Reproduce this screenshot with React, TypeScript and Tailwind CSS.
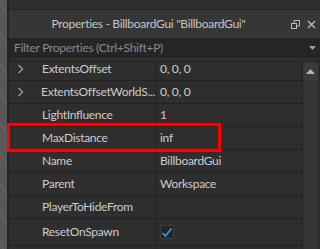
import { ReactNode } from 'react';

type Row = { name: string; value?: string; expand?: boolean; check?: boolean; tall?: boolean };

const ROWS: Row[] = [
  { name: 'ExtentsOffset', value: '0, 0, 0', expand: true },
  { name: 'ExtentsOffsetWorldS...', value: '0, 0, 0', expand: true },
  { name: 'LightInfluence', value: '1' },
  { name: 'MaxDistance', value: 'inf' },
  { name: 'Name', value: 'BillboardGui' },
  { name: 'Parent', value: 'Workspace' },
  { name: 'PlayerToHideFrom' },
  { name: 'ResetOnSpawn', check: true, tall: true },
  { name: '' },
];

function Chevron() {
  return (
    <svg width="7" height="10" viewBox="0 0 7 10" className="shrink-0">
      <path d="M1.5 1 L5.5 5 L1.5 9" fill="none" stroke="#9a9a9a" strokeWidth="1.4" />
    </svg>
  );
}

function PropRow({ row }: { row: Row }) {
  let value: ReactNode = row.value;
  if (row.check) {
    value = (
      <div className="w-[14px] h-[14px] bg-[#242424] border border-[#3c3c3c] flex items-center justify-center">
        <svg width="12" height="11" viewBox="0 0 12 11">
          <path d="M1.5 6 L4.5 9 L10.5 1.5" fill="none" stroke="#3b9be6" strokeWidth="1.6" />
        </svg>
      </div>
    );
  }
  return (
    <div className={`flex border-b border-[#222222] shrink-0 ${row.tall ? 'h-[27px]' : 'h-[23px]'}`}>
      <div className="w-[147px] flex items-center pl-[8px] border-r border-[#222222]">
        <div className="w-[25px]">{row.expand && <Chevron />}</div>
        <span className="whitespace-nowrap">{row.name}</span>
      </div>
      <div className="flex-1 flex items-center pl-[4px] whitespace-nowrap">{value}</div>
    </div>
  );
}

export default function App() {
  return (
    <div
      className="w-[320px] h-[249px] flex overflow-hidden relative text-[12px] tracking-[-0.3px] text-[#cccccc]"
      style={{ fontFamily: "Lato, 'Liberation Sans', sans-serif" }}
    >
      {/* neighbouring window edge */}
      <div className="w-[7px] h-full bg-[#5a5759] shrink-0 overflow-hidden">
        <svg width="7" height="249" viewBox="0 0 7 249">
          {Array.from({ length: 9 }).map((_, i) => (
            <path key={i} d={`M0 ${i * 30 + 4} L7 ${i * 30 + 14}`} stroke="#6e6b6d" strokeWidth="1" />
          ))}
        </svg>
      </div>
      <div className="w-[2px] h-full bg-[#232323] shrink-0" />

      <div className="flex-1 flex flex-col bg-[#2e2e2e] min-w-0">
        <div className="h-[10px] bg-[#2e2e2e] border-b border-[#232323] shrink-0" />

        {/* title bar */}
        <div className="h-[28px] bg-[#363636] flex items-center shrink-0 relative">
          <div className="flex-1 text-center pr-[32px] text-[#c4c4c4] whitespace-nowrap">
            Properties - BillboardGui "BillboardGui"
          </div>
          <div className="absolute right-[4px] top-[10px] flex items-center gap-[7px]">
            <svg width="9" height="9" viewBox="0 0 9 9">
              <rect x="0.5" y="3.5" width="5" height="5" fill="none" stroke="#bdbdbd" />
              <path d="M3 3.5 V0.5 H8.5 V6 H5.5" fill="none" stroke="#bdbdbd" />
            </svg>
            <svg width="9" height="9" viewBox="0 0 9 9">
              <path d="M1 1 L8 8 M8 1 L1 8" stroke="#bdbdbd" strokeWidth="1.3" />
            </svg>
          </div>
        </div>

        {/* filter */}
        <div className="h-[20px] bg-[#252525] flex items-center pl-[5px] pr-[4px] shrink-0">
          <span className="flex-1 text-[#8a8a8a] whitespace-nowrap">Filter Properties (Ctrl+Shift+P)</span>
          <svg width="7" height="4" viewBox="0 0 7 4">
            <path d="M0 0 H7 L3.5 4 Z" fill="#a0a0a0" />
          </svg>
        </div>
        <div className="h-[3px] shrink-0" />

        {/* property list */}
        <div className="flex-1 flex border-t border-[#222222] min-h-0">
          <div className="flex-1 overflow-hidden border-r border-[#222222]">
            <div className="-mt-[4px] flex flex-col">
              {ROWS.map((r, i) => (
                <PropRow key={i} row={r} />
              ))}
            </div>
          </div>
          <div className="w-[15px] bg-[#353535] flex flex-col shrink-0">
            <div className="h-[18px] flex items-center justify-center bg-[#3a3a3a]">
              <svg width="9" height="5" viewBox="0 0 9 5">
                <path d="M0 5 H9 L4.5 0 Z" fill="#b5b5b5" />
              </svg>
            </div>
          </div>
          <div className="w-[2px] bg-[#2a2a2a] shrink-0" />
        </div>
      </div>

      {/* highlight annotation */}
      <div className="absolute left-[7px] top-[123px] w-[214px] h-[29px] border-[3px] border-[#ff0000]" />
    </div>
  );
}
